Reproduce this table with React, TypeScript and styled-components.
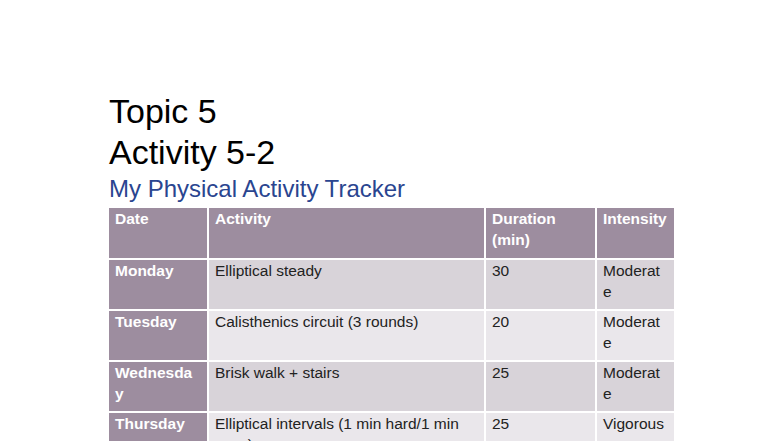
import React, { FC } from 'react'
import styled, { createGlobalStyle } from 'styled-components'

const GlobalStyle = createGlobalStyle`
  html, body {
    margin: 0;
    padding: 0;
    background: #fff;
    overflow: hidden;
    font-family: "Liberation Sans", Arial, sans-serif;
  }
`

type Entry = {
  day: string
  activity: string
  duration: string
  intensity: string
}

const entries: Entry[] = [
  { day: 'Monday', activity: 'Elliptical steady', duration: '30', intensity: 'Moderate' },
  { day: 'Tuesday', activity: 'Calisthenics circuit (3 rounds)', duration: '20', intensity: 'Moderate' },
  { day: 'Wednesday', activity: 'Brisk walk + stairs', duration: '25', intensity: 'Moderate' },
  { day: 'Thursday', activity: 'Elliptical intervals (1 min hard/1 min easy)', duration: '25', intensity: 'Vigorous' }
]

const Slide = styled.main`
  width: 784px;
  height: 441px;
  padding: 91px 0 0 109px;
  box-sizing: border-box;
`

const Title = styled.h1`
  margin: 0;
  font-size: 34px;
  line-height: 41px;
  font-weight: normal;
  color: #000;
`

const Subtitle = styled.h2`
  margin: 2px 0 0;
  font-size: 24px;
  line-height: 28px;
  font-weight: normal;
  color: #2a4590;
`

const Table = styled.div`
  display: grid;
  grid-template-columns: 98px 275px 109px 77px;
  grid-template-rows: 50px;
  grid-auto-rows: minmax(49px, auto);
  gap: 2px;
  margin-top: 5px;
  width: 565px;
`

const Cell = styled.div<{ $head?: boolean; $first?: boolean; $odd?: boolean }>`
  padding: 0 ${p => (p.$first ? '10px' : '6px')} 0 6px;
  font-size: 15.5px;
  line-height: 21px;
  overflow-wrap: anywhere;
  font-weight: ${p => (p.$head || p.$first ? 'bold' : 'normal')};
  color: ${p => (p.$head || p.$first ? '#fff' : '#222')};
  background: ${p => (p.$head || p.$first ? '#9d8d9f' : p.$odd ? '#d8d3d9' : '#eae7eb')};
`

const App: FC = () => (
  <Slide>
    <GlobalStyle />
    <Title>
      Topic 5
      <br />
      Activity 5-2
    </Title>
    <Subtitle>My Physical Activity Tracker</Subtitle>
    <Table>
      <Cell $head $first>Date</Cell>
      <Cell $head>Activity</Cell>
      <Cell $head>Duration (min)</Cell>
      <Cell $head>Intensity</Cell>
      {entries.map((e, i) => (
        <React.Fragment key={e.day}>
          <Cell $first>{e.day}</Cell>
          <Cell $odd={i % 2 === 0}>{e.activity}</Cell>
          <Cell $odd={i % 2 === 0}>{e.duration}</Cell>
          <Cell $odd={i % 2 === 0}>{e.intensity}</Cell>
        </React.Fragment>
      ))}
    </Table>
  </Slide>
)

App.displayName = 'App'

export default App
